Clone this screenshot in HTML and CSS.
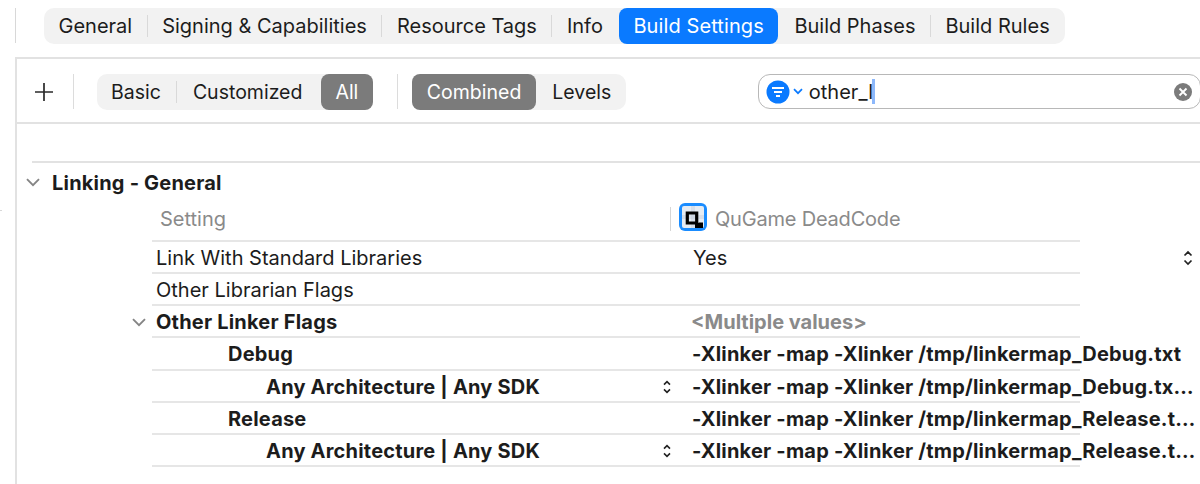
FILE: index.html
```html
<!DOCTYPE html>
<html lang="en">
<head>
<meta charset="utf-8">
<title>Build Settings</title>
<link rel="stylesheet" href="styles.css">
</head>
<body>
<div class="page">
  <i class="tick"></i>
  <header class="tabbar">
    <nav class="seg tabs">
      <span class="item">General</span><i class="sep"></i>
      <span class="item">Signing &amp; Capabilities</span><i class="sep"></i>
      <span class="item">Resource Tags</span><i class="sep"></i>
      <span class="item">Info</span>
      <span class="item blue">Build Settings</span>
      <span class="item">Build Phases</span><i class="sep"></i>
      <span class="item">Build Rules</span>
    </nav>
  </header>
  <main class="content">
    <section class="toolbar">
      <svg class="plus" width="20" height="20" viewBox="0 0 20 20"><path d="M10 1v18M1 10h18" stroke="#2a2a2a" stroke-width="1.7" fill="none"/></svg>
      <i class="vsep first"></i>
      <div class="seg small">
        <span class="item">Basic</span><i class="sep"></i>
        <span class="item">Customized</span>
        <span class="item grey">All</span>
      </div>
      <i class="vsep second"></i>
      <div class="seg small">
        <span class="item grey combined">Combined</span>
        <span class="item">Levels</span>
      </div>
      <div class="search">
        <svg class="filter" width="24" height="24" viewBox="0 0 24 24"><circle cx="12" cy="12" r="11.5" fill="#0a7aff"/><path d="M6 8h12M8 12h8M10 16h4" stroke="#fff" stroke-width="1.8" fill="none"/></svg>
        <svg class="caret" width="10" height="7" viewBox="0 0 10 7"><path d="M1 1.2l4 4 4-4" stroke="#0a7aff" stroke-width="1.7" fill="none"/></svg>
        <span class="query">other_l</span><i class="cursor"></i>
        <svg class="clear" width="18" height="18" viewBox="0 0 18 18"><circle cx="9" cy="9" r="9" fill="#7b7b7b"/><path d="M5.5 5.5l7 7M12.5 5.5l-7 7" stroke="#fff" stroke-width="1.9" fill="none"/></svg>
      </div>
    </section>
    <div class="spacer"></div>
    <section class="settings">
      <h2 class="group">
        <svg width="14" height="9" viewBox="0 0 14 9"><path d="M1 1.2l6 6 6-6" stroke="#858585" stroke-width="1.9" fill="none"/></svg>
        <span>Linking - General</span>
      </h2>
      <div class="table">
        <div class="row head">
          <span class="name">Setting</span>
          <span class="value target">
            <i class="colsep"></i>
            <svg class="app-icon" width="28" height="28" viewBox="0 0 28 28">
              <rect width="28" height="28" rx="6" fill="#1a8cff"/>
              <rect x="3" y="3" width="22" height="22" rx="2" fill="#e6ecf3"/>
              <path d="M3 13h22M3 15h22M13 3v22M15 3v22" stroke="#b9c6d6" stroke-width=".7" fill="none"/>
              <path d="M8.3 10h9.4v10H8.3z" fill="none" stroke="#000" stroke-width="3.2"/>
              <path d="M16 20h3.5v-.5H24V25H16z" fill="#000"/>
            </svg>
            <span class="target-name">QuGame DeadCode</span>
          </span>
        </div>
        <div class="row">
          <span class="name">Link With Standard Libraries</span>
          <span class="value plain">Yes</span>
          <svg class="stepper far" width="10" height="16" viewBox="0 0 10 16"><path d="M1.5 5.5L5 2l3.5 3.5M1.5 10.5L5 14l3.5-3.5" stroke="#222" stroke-width="1.7" fill="none"/></svg>
        </div>
        <div class="row"><span class="name">Other Librarian Flags</span></div>
        <div class="row">
          <svg class="tree" width="14" height="9" viewBox="0 0 14 9"><path d="M1 1.2l6 6 6-6" stroke="#858585" stroke-width="1.9" fill="none"/></svg>
          <span class="name bold">Other Linker Flags</span>
          <span class="value muted">&lt;Multiple values&gt;</span>
        </div>
        <div class="row">
          <span class="name bold lvl1">Debug</span>
          <span class="value bold">-Xlinker -map -Xlinker /tmp/linkermap_Debug.txt</span>
        </div>
        <div class="row">
          <span class="name bold lvl2">Any Architecture | Any SDK</span>
          <svg class="stepper near" width="10" height="14" viewBox="0 0 10 14"><path d="M2 4.6L5 1.6l3 3M2 9.4l3 3 3-3" stroke="#222" stroke-width="1.6" fill="none"/></svg>
          <span class="value bold">-Xlinker -map -Xlinker /tmp/linkermap_Debug.tx…</span>
        </div>
        <div class="row">
          <span class="name bold lvl1">Release</span>
          <span class="value bold">-Xlinker -map -Xlinker /tmp/linkermap_Release.t…</span>
        </div>
        <div class="row">
          <span class="name bold lvl2">Any Architecture | Any SDK</span>
          <svg class="stepper near" width="10" height="14" viewBox="0 0 10 14"><path d="M2 4.6L5 1.6l3 3M2 9.4l3 3 3-3" stroke="#222" stroke-width="1.6" fill="none"/></svg>
          <span class="value bold">-Xlinker -map -Xlinker /tmp/linkermap_Release.t…</span>
        </div>
      </div>
    </section>
  </main>
</div>
</body>
</html>
```
FILE: styles.css
```css
* { box-sizing: border-box; }
html, body { margin: 0; padding: 0; background: #fff; }
body {
  width: 1200px;
  height: 484px;
  overflow: hidden;
  font-family: Inter, "Liberation Sans", sans-serif;
  font-size: 20px;
  color: #1c1c1c;
}
.page { display: flex; flex-direction: column; height: 484px; position: relative; }
.tick { position: absolute; left: 0; top: 210px; width: 2px; height: 1px; background: #d8d8d8; }
.tabbar {
  height: 59px;
  padding: 8px 0 0 29px;
  border-bottom: 2px solid #e2e2e2;
  margin-left: 15px;
  position: relative;
}
.tabbar::before {
  content: "";
  position: absolute;
  left: 0;
  top: 8px;
  width: 1px;
  height: 35px;
  background: #d8d8d8;
}
.seg {
  display: inline-flex;
  align-items: center;
  background: #f2f2f2;
  border-radius: 10px;
  height: 36px;
}
.tabs { width: 1021px; padding-left: 14.5px; }
.item { white-space: nowrap; display: flex; align-items: center; height: 100%; border-radius: 8px; }
.sep { width: 1px; height: 22px; background: #d9d9d9; margin: 0 14.5px; flex: none; }
.tabs .blue {
  background: #0a7aff;
  color: #fff;
  padding: 0 14.5px;
  margin-left: 16px;
  margin-right: 16px;
  letter-spacing: .1px;
}
.content {
  flex: 1;
  margin-left: 15px;
  border-left: 2px solid #e2e2e2;
  display: flex;
  flex-direction: column;
}
.toolbar {
  height: 65px;
  border-bottom: 2px solid #e2e2e2;
  display: flex;
  align-items: center;
  padding: 2px 0 0 17px;
}
.plus { flex: none; margin-right: 19px; }
.vsep { width: 1px; height: 35px; background: #dcdcdc; flex: none; }
.vsep.first { margin-right: 23px; }
.vsep.second { margin: 0 14px 0 24px; }
.small { padding: 0 15px 0 14px; font-size: 19.5px; }
.small .sep { margin: 0 15.5px; }
.small .grey {
  background: #7b7b7b;
  color: #fff;
  padding: 0 14.5px;
  margin: 0 -15px 0 18.5px;
}
.small .combined { margin: 0 16px 0 -14px; padding: 0 15px; }
.search {
  width: 443px;
  height: 35px;
  margin-left: 131.5px;
  border: 1.5px solid #b8b8b8;
  border-radius: 12px;
  display: flex;
  align-items: center;
  padding-left: 7px;
  flex: none;
}
.filter { flex: none; }
.caret { flex: none; margin: 0 6px 0 3px; }
.cursor { width: 3px; height: 25px; background: #8db8fb; margin-left: -1px; }
.clear { margin-left: auto; margin-right: 8px; }
.spacer { height: 39px; flex: none; margin-left: 15px; border-bottom: 2px solid #e2e2e2; }
.settings { display: flex; flex-direction: column; }
.group {
  margin: 0;
  height: 39px;
  font-size: 20px;
  font-weight: 700;
  letter-spacing: .2px;
  display: flex;
  align-items: center;
  gap: 12px;
  padding-left: 9px;
}
.table { margin-left: 135px; width: 928px; }
.row {
  display: flex;
  align-items: center;
  height: 32.15px;
  border-bottom: 2px solid #e6e6e6;
  position: relative;
  white-space: nowrap;
  padding: 2px 0 0 4px;
}
.row.head { height: 40px; color: #8a8a8a; padding: 0 0 4px 4px; }
.name { width: 536px; flex: none; }
.head .name { padding-left: 4px; }
.bold { font-weight: 700; letter-spacing: .2px; }
.lvl1 { padding-left: 72px; }
.lvl2 { padding-left: 110px; }
.value { flex: none; }
.value.plain { margin-left: 1px; }
.value.muted { color: #8a8a8a; font-weight: 700; margin-left: -1px; }
.target { display: flex; align-items: center; margin-left: -22px; }
.app-icon { margin: -4px 8px 0 8px; }
.target-name { letter-spacing: -.2px; }
.colsep { width: 1px; height: 24px; background: #d6d6d6; }
.tree { position: absolute; left: -20px; top: 12px; }
.stepper { flex: none; }
.stepper.far { position: absolute; left: 1031px; top: 8px; }
.stepper.near { margin-left: -30px; margin-right: 20px; }
```
